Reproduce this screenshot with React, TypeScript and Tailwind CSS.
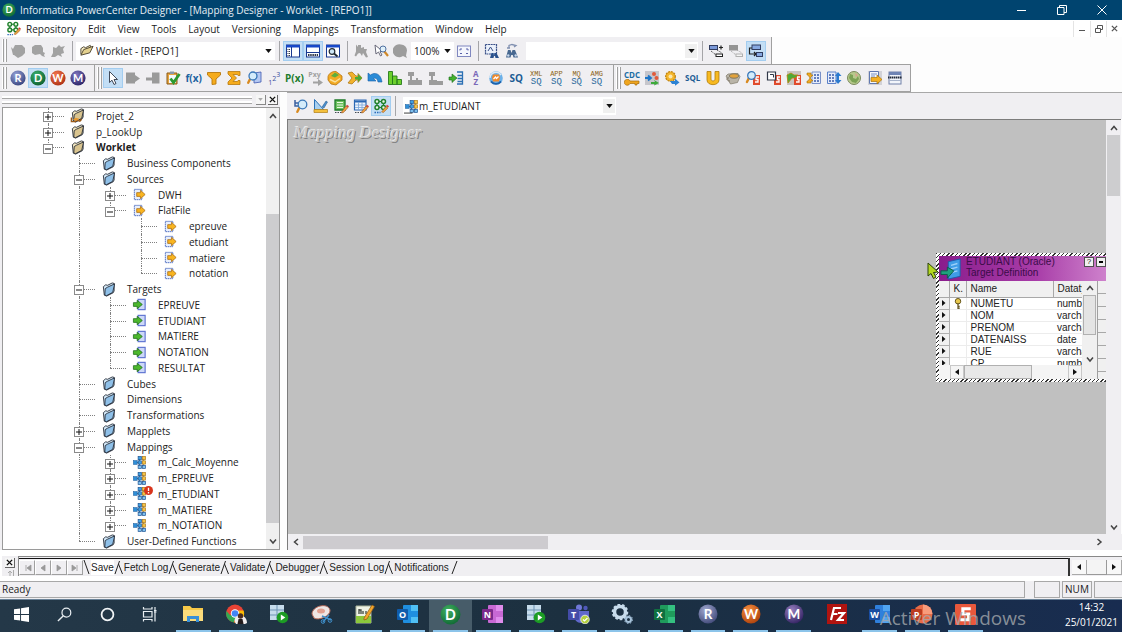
import React, { useState } from 'react';

type IconName = string;

interface TreeNode {
  label: string;
  depth: number;
  icon: 'project' | 'folderTan' | 'folderBlue' | 'source' | 'target' | 'mapping' | 'mappingError';
  toggle?: '+' | '-';
  last?: boolean;
  lines?: number[];
  bold?: boolean;
}

const TREE: TreeNode[] = [
  { label: 'Projet_2', depth: 0, icon: 'project', toggle: '+' },
  { label: 'p_LookUp', depth: 0, icon: 'folderTan', toggle: '+' },
  { label: 'Worklet', depth: 0, icon: 'folderTan', toggle: '-', last: true, bold: true },
  { label: 'Business Components', depth: 1, icon: 'folderBlue' },
  { label: 'Sources', depth: 1, icon: 'folderBlue', toggle: '-' },
  { label: 'DWH', depth: 2, icon: 'source', toggle: '+', lines: [1] },
  { label: 'FlatFile', depth: 2, icon: 'source', toggle: '-', last: true, lines: [1] },
  { label: 'epreuve', depth: 3, icon: 'source', lines: [1] },
  { label: 'etudiant', depth: 3, icon: 'source', lines: [1] },
  { label: 'matiere', depth: 3, icon: 'source', lines: [1] },
  { label: 'notation', depth: 3, icon: 'source', last: true, lines: [1] },
  { label: 'Targets', depth: 1, icon: 'folderBlue', toggle: '-' },
  { label: 'EPREUVE', depth: 2, icon: 'target', lines: [1] },
  { label: 'ETUDIANT', depth: 2, icon: 'target', lines: [1] },
  { label: 'MATIERE', depth: 2, icon: 'target', lines: [1] },
  { label: 'NOTATION', depth: 2, icon: 'target', lines: [1] },
  { label: 'RESULTAT', depth: 2, icon: 'target', last: true, lines: [1] },
  { label: 'Cubes', depth: 1, icon: 'folderBlue' },
  { label: 'Dimensions', depth: 1, icon: 'folderBlue' },
  { label: 'Transformations', depth: 1, icon: 'folderBlue' },
  { label: 'Mapplets', depth: 1, icon: 'folderBlue', toggle: '+' },
  { label: 'Mappings', depth: 1, icon: 'folderBlue', toggle: '-' },
  { label: 'm_Calc_Moyenne', depth: 2, icon: 'mapping', toggle: '+', lines: [1] },
  { label: 'm_EPREUVE', depth: 2, icon: 'mapping', toggle: '+', lines: [1] },
  { label: 'm_ETUDIANT', depth: 2, icon: 'mappingError', toggle: '+', lines: [1] },
  { label: 'm_MATIERE', depth: 2, icon: 'mapping', toggle: '+', lines: [1] },
  { label: 'm_NOTATION', depth: 2, icon: 'mapping', toggle: '+', last: true, lines: [1] },
  { label: 'User-Defined Functions', depth: 1, icon: 'folderBlue', last: true },
];

const MENUS = ['Repository', 'Edit', 'View', 'Tools', 'Layout', 'Versioning', 'Mappings', 'Transformation', 'Window', 'Help'];
const OUTPUT_TABS = ['Save', 'Fetch Log', 'Generate', 'Validate', 'Debugger', 'Session Log', 'Notifications'];
const COLUMNS = [
  { name: 'NUMETU', type: 'number', key: true },
  { name: 'NOM', type: 'varchar2' },
  { name: 'PRENOM', type: 'varchar2' },
  { name: 'DATENAISS', type: 'date' },
  { name: 'RUE', type: 'varchar2' },
  { name: 'CP', type: 'number' },
];

/* ---------- shared drawings, all on a 16x16 grid ---------- */

function MappingGlyph() {
  return (
    <g>
      <path d="M5 8h3M8 3v10M8 3h2M8 13h2M12 3v10" stroke="#4a6a8a" fill="none" />
      <rect x="1.5" y="6" width="4" height="4" fill="#2f8fd8" stroke="#1d5f9e" strokeWidth=".6" />
      <rect x="6.5" y="1.5" width="3.5" height="3.5" fill="#3fa0e0" stroke="#1d4f8e" strokeWidth=".7" />
      <rect x="6.5" y="6.2" width="3.5" height="3.5" fill="#3fa0e0" stroke="#1d4f8e" strokeWidth=".7" />
      <rect x="6.5" y="11" width="3.5" height="3.5" fill="#7cc0ee" stroke="#1d4f8e" strokeWidth=".7" />
      <rect x="11" y="1.5" width="3.5" height="3.5" fill="#f6c445" stroke="#a8761a" strokeWidth=".7" />
      <rect x="11" y="6.2" width="3.5" height="3.5" fill="#f6c445" stroke="#a8761a" strokeWidth=".7" />
      <rect x="11" y="11" width="3.5" height="3.5" fill="#7cc0ee" stroke="#1d4f8e" strokeWidth=".7" />
    </g>
  );
}

function FolderGlyph({ front, back }: { front: string; back: string }) {
  return (
    <g stroke="#1c2430" strokeWidth=".9" strokeLinejoin="round">
      <path d="M2.500 5l2.500-2 2 .5 5-2.500 2 .5v8l-1 2-7 3.500-2.500-1z" fill={back} />
      <path d="M4.500 7l2.500-1.500 7.500-3.500-2 9-6.500 3.500-2-.5z" fill={front} />
    </g>
  );
}

function DesignerGlyph() {
  return (
    <g>
      <g fill="#eaf7e4" stroke="#20802c" strokeWidth="1.500">
        <circle cx="4" cy="3.500" r="2" />
        <circle cx="10.500" cy="3.500" r="2" />
        <circle cx="4" cy="9.500" r="2" />
        <circle cx="10.500" cy="9.500" r="2" />
      </g>
      <path d="M6 3.500h2.500M6 9.500h2.500M4 5.500v2M10.500 5.500v2" stroke="#20802c" strokeWidth="1.200" />
      <path d="M8.500 14l4.500-5.500 2 1.500-4.500 4.500z" fill="#e8a040" stroke="#a05a20" strokeWidth=".5" />
      <path d="M13 8l1-1.300 2 1.500-1 1.300z" fill="#d83a30" />
      <path d="M1.500 14.500h6" stroke="#2a6ab8" strokeWidth="1.300" strokeDasharray="1.500 1" />
    </g>
  );
}

function Pencil() {
  return (
    <g>
      <path d="M8.500 14l4.500-6 2 1.500-4.500 5-2 .5z" fill="#f0a040" stroke="#8a4a18" strokeWidth=".5" />
      <path d="M13 8l1-1.200 2 1.500-1 1.200z" fill="#d04038" />
    </g>
  );
}

function Lens({ x = 6, y = 6, r = 4 }: { x?: number; y?: number; r?: number }) {
  return (
    <g>
      <path d={`M${x - r * 0.7} ${y + r * 0.7}L${x - r * 1.2} ${y + r * 1.7}`} stroke="#d88a20" strokeWidth="2.400" strokeLinecap="round" />
      <circle cx={x} cy={y} r={r} fill="#d4ecfb" stroke="#3a78b8" strokeWidth="1.300" />
    </g>
  );
}

const ICONS: Record<IconName, React.ReactNode> = {
  mapping: <MappingGlyph />,
  mappingError: <MappingGlyph />,
  folderTan: <FolderGlyph front="#d9c48f" back="#f2e6c0" />,
  project: (
    <g>
      <FolderGlyph front="#d9c48f" back="#f2e6c0" />
      <path d="M1.500 10v4.500h4l2-1.500 3 1 2-2" fill="none" stroke="#9a5a18" strokeWidth="1.500" />
      <path d="M3 12.500l3-2 4 1-3 2z" fill="#e89a30" />
    </g>
  ),
  folderBlue: <FolderGlyph front="#8fc0e8" back="#d5e9f8" />,
  folderOpen: (
    <g stroke="#3a3220" strokeWidth=".9" strokeLinejoin="round">
      <path d="M2 12V6l3-2 2 1 5-2.500 1 2.500" fill="#f6ecc4" />
      <path d="M2 13l3-6 10-3.500-3.500 7z" fill="#e3d08e" />
    </g>
  ),
  source: (
    <g>
      <rect x="2.500" y="2.500" width="8" height="11" fill="#e8effb" stroke="#4a6ac0" strokeDasharray="1.500 .6" />
      <path d="M5 6h4V3.500L14 8l-5 4.500V10H5z" fill="#f9b520" stroke="#a86a10" strokeWidth=".8" />
    </g>
  ),
  target: (
    <g>
      <rect x="6.500" y="2.500" width="7.500" height="11" fill="#cdd8f8" stroke="#5a70d0" strokeWidth="1.200" />
      <path d="M1.500 6h4V3.500L11 8l-5.500 4.500V10h-4z" fill="#4cb82c" stroke="#1c6a18" strokeWidth=".8" />
    </g>
  ),
  designer: <DesignerGlyph />,
  greyA: <path d="M1 4l2 2 2-4h7l3 3v5l-3 3-4 2-4-3H3z" fill="#a2a2a2" />,
  greyB: <path d="M2 4l3-2h6l2 3v4l2 1-1 2 1 2-3-1-2-2-5 1-3-2z" fill="#a2a2a2" />,
  greyC: <path d="M3 4l3 1 3-3 2 2 4-1-2 3 1 4-3 1 1 3-4-2-3 2-4 0 2-4z" fill="#a2a2a2" />,
  paneLeft: (
    <g>
      <rect x="1.500" y="2" width="13" height="12" fill="#fff" stroke="#183890" />
      <path d="M1 2h14v2.500H1z" fill="#1848c8" />
      <path d="M6.500 4v10" stroke="#183890" />
      <path d="M3 6v7M4.500 6v7" stroke="#303848" strokeDasharray="1 1" />
    </g>
  ),
  paneBottom: (
    <g>
      <rect x="1.500" y="2" width="13" height="12" fill="#fff" stroke="#183890" />
      <path d="M1 2h14v2.500H1z" fill="#1848c8" />
      <path d="M2 9.500h12" stroke="#183890" />
      <path d="M3 12h10" stroke="#303848" strokeWidth="2" strokeDasharray="1.500 .7" />
    </g>
  ),
  paneZoom: (
    <g>
      <rect x="1.500" y="2" width="13" height="12" fill="#fff" stroke="#183890" />
      <path d="M1 2h14v2.500H1z" fill="#1848c8" />
      <circle cx="7" cy="8.500" r="2.800" fill="#d0e8f8" stroke="#202830" strokeWidth="1.200" />
      <path d="M9 10.500l3.500 3" stroke="#202830" strokeWidth="1.800" />
    </g>
  ),
  cursorGrey: (
    <path d="M3 1.500l2 2.500V2h3v3l3-1v2h3l-1 3 2 5-2 .5-3-4.500-1 3-2-3-2 .5-2 3-1.500-1 1.500-4H3z" fill="#a0a0a0" />
  ),
  cursorZoom: (
    <g>
      <path d="M2 2l1 9 2.500-2 2 4 1.500-1-2-3.500h3z" fill="#fff" stroke="#686878" />
      <path d="M11 8l4 5" stroke="#d08828" strokeWidth="2.200" />
      <circle cx="10" cy="6" r="3" fill="#dff0fa" stroke="#5070a0" />
    </g>
  ),
  greyBall: <path d="M8 1.500a6 6 0 0 1 6 6l-1 5 1 2.500-4-2a6.500 6.500 0 1 1-2-11.500z" fill="#9c9c9c" />,
  fit: (
    <g>
      <rect x="1.500" y="3" width="13" height="10.500" fill="#f4f6fd" stroke="#8088c0" />
      <path d="M4 6h2M10 6h2M4 10.500h2M10 10.500h2M4 6v1.500M12 6v1.500" stroke="#5860a8" />
    </g>
  ),
  find: (
    <g>
      <rect x="1.500" y="1.500" width="11" height="9.500" fill="#eaf0fa" stroke="#3a5088" strokeWidth="1.200" strokeDasharray="2 .6" />
      <path d="M4 8l2.500-4L9 8" fill="none" stroke="#3a5088" />
      <path d="M6 15l1.500-5h2l.5 3 .5-3h2L15 15h-3.500l-.5-2h-1l-.5 2z" fill="#28508c" />
    </g>
  ),
  findNext: (
    <g>
      <path d="M5 5V2.500l3-1 4 1-2 1.500M3 5h3" fill="none" stroke="#8090b0" strokeWidth="1.300" />
      <path d="M2 14.500l2-7.500h2.500l1 3 1-3H11l3 7.500H9.500l-.8-2.500H7.300l-.8 2.500z" fill="#486890" />
      <circle cx="4.300" cy="12.500" r="1.200" fill="#c8d8ec" />
      <circle cx="11.700" cy="12.500" r="1.200" fill="#c8d8ec" />
    </g>
  ),
  iconizeA: (
    <g>
      <rect x="1.500" y="2.500" width="8" height="4" fill="#7a98d8" stroke="#303c60" />
      <path d="M11 4.500h4M13 2.500v4" stroke="#202020" strokeWidth="1.200" />
      <path d="M3 8l5 4M9 7l5 3" stroke="#303030" strokeDasharray="1 1" />
      <rect x="8" y="11" width="6.500" height="2.500" fill="#fff" stroke="#202020" />
    </g>
  ),
  iconizeB: (
    <g>
      <rect x="1" y="2" width="9" height="5.500" fill="#949494" />
      <path d="M3 8l5 4M9 7l5 3" stroke="#a0a0a0" strokeDasharray="1 1" />
      <rect x="8" y="11" width="6.500" height="2.500" fill="#f4f4f4" stroke="#b0b0b0" />
    </g>
  ),
  iconizeC: (
    <g>
      <rect x="4" y="2" width="8.500" height="4.500" fill="#86a8e0" stroke="#303c60" />
      <path d="M4 5H1.500v6H8M6 9l2 2-2 2" fill="none" stroke="#202020" strokeWidth="1.200" />
      <rect x="8.500" y="9.500" width="6" height="4" fill="#86a8e0" stroke="#303c60" />
    </g>
  ),
  cursor: <path d="M4.500 1.500v11l2.500-2.300L9 14.500l2-1-2-4h3.500z" fill="#fff" stroke="#303848" strokeWidth=".9" />,
  greyTag: <path d="M1 2.500h9V5l5 3.500L10 12v1.500H1z" fill="#9a9a9a" />,
  greyTag2: <path d="M7 2.500h7.500v11H7v-3H1v-3h6z" fill="#9a9a9a" />,
  clipboard: (
    <g>
      <path d="M2 3h10v11H2z" fill="#e7a540" stroke="#8a5a18" />
      <path d="M4 5h7v8H4z" fill="#f3f7fb" />
      <path d="M5 1.500h4V4H5z" fill="#8898a8" />
      <path d="M5.500 8.500l3 4L14.500 4" fill="none" stroke="#2a9a30" strokeWidth="2.800" />
    </g>
  ),
  filter: <path d="M1.500 2.500h13v2.500L10 9v5l-4 .5V9L1.500 5z" fill="#f5ab1c" stroke="#b8780c" strokeWidth=".9" />,
  sigma: <path d="M2 1.500h12v4h-2L11.500 4.500H7L10.500 8 7 11.500h4.500l.5-1h2v4H2V12l4-4-4-4z" fill="#f5ab1c" stroke="#b8780c" strokeWidth=".8" />,
  lookup: (
    <g>
      <path d="M8 3l7-1v10l-7 1z" fill="#b4c8f2" stroke="#4058b0" strokeWidth=".8" />
      <Lens x={7} y={6} r={4} />
    </g>
  ),
  ball: (
    <g>
      <path d="M1 6.500C2 3 6 1 9 1.500L15 6v4l-6 5-5-1-3-4z" fill="#f2ab24" stroke="#b8740c" strokeWidth=".8" />
      <path d="M4 6l4-3.500L12 5 8 7.500z" fill="#5cae3c" />
      <path d="M3 9.500l5 2.500 5-3.500" fill="none" stroke="#fbe09a" strokeWidth="1.500" />
    </g>
  ),
  router: (
    <g>
      <path d="M1 3l4-1 4 4h2V3.500L15 8l-4 4.500V10H9l-4 4-4-1 4-5z" fill="#f2b22c" stroke="#a8700c" strokeWidth=".7" />
      <path d="M8 7h3V4l4 4-4 4V9.500H8z" fill="#4caa38" />
    </g>
  ),
  undo: <path d="M1 3l2.500 2C8 1.500 14 4 15 12h-4c-.5-3-2-4.500-4.500-3.500L9 11H1z" fill="#2b8bd6" stroke="#1a5fa8" strokeWidth=".6" />,
  barsGreen: (
    <g fill="#6cd02c" stroke="#287a1c" strokeWidth=".9">
      <path d="M1.500 1.500h4v13h-4zM5.500 6h4.500v8.500H5.500zM10 9.500h4.500v5H10z" />
    </g>
  ),
  barsGreyA: <path d="M1 2h6v4H5v4h4V8h2v2h4v5H1v-5h2V6H1z" fill="#9c9c9c" />,
  barsGreyB: <path d="M1 2h6v4H5v4h4v1h6v4H1v-5h2V6H1z" fill="#9c9c9c" />,
  sourceIn: (
    <g>
      <path d="M1 7h3V4l5 4-5 4.500V10H1z" fill="#42b02c" stroke="#1a6a18" strokeWidth=".6" />
      <path d="M9 2h5.500v12H9M9.500 5.500H14M9.500 8.500H14M9.500 11.500H14" fill="none" stroke="#2c70b4" strokeWidth="1.300" />
    </g>
  ),
  globe: (
    <g>
      <circle cx="8" cy="8" r="6.800" fill="#6cb0e8" />
      <path d="M2 8a6 6 0 0 1 11-3" stroke="#dceaf6" strokeWidth="1.500" fill="none" />
      <path d="M5 4.500h6l1 3-1 4H5l-1-4z" fill="#f08a2c" />
      <path d="M5.500 9l2-2 1 1.500 2-2" stroke="#fff" strokeWidth="1.300" fill="none" />
      <path d="M3 11.500c3 3 7 3 10 0" stroke="#1d62ac" strokeWidth="1.800" fill="none" />
    </g>
  ),
  flow: (
    <g>
      <path d="M1 1h14v14H1z" fill="#c6c6cc" />
      <path d="M1 8h5M4 5.500L7 8l-3 2.500" stroke="#1f76c8" strokeWidth="1.800" fill="none" />
      <circle cx="10" cy="4" r="2" fill="#e25a3a" />
      <circle cx="12.500" cy="8" r="2" fill="#e25a3a" />
      <path d="M7 12h4l-1-2 5 3-5 2.500.5-1.500H7z" fill="#3daa3a" />
    </g>
  ),
  gearArrow: (
    <g>
      <circle cx="6.500" cy="6.500" r="4.800" fill="#f4b62c" stroke="#c08414" strokeWidth="1.300" strokeDasharray="2 .8" />
      <circle cx="6.500" cy="6.500" r="2" fill="#fbe7ae" />
      <path d="M6 11h5V8.500l4.500 4-4.500 3.200V14H8z" fill="#2c82d4" />
    </g>
  ),
  union: <path d="M2 1.500h4V9c0 2.600 4 2.600 4 0V1.500h4V10c0 6.200-12 6.200-12 0z" fill="#f7b920" stroke="#b07c0c" strokeWidth=".8" />,
  mug: (
    <g>
      <path d="M1 6l2-2 10-.5 2 3-2.500 6-7 1.500-3-5z" fill="#b9b4a8" stroke="#7e7868" strokeWidth=".7" />
      <ellipse cx="9" cy="6" rx="4.500" ry="2.200" fill="#e2a23c" stroke="#807860" />
      <path d="M4 8c-3-1-3 3 1 3" fill="none" stroke="#807868" />
    </g>
  ),
  lensRed: (
    <g>
      <path d="M8 5h7v10H8z" fill="#e04a2c" />
      <path d="M14 7h-3v2.500h2V12h-3" stroke="#fff" strokeWidth="1.300" fill="none" />
      <Lens x={6.500} y={5.500} r={3.800} />
    </g>
  ),
  docRed: (
    <g>
      <path d="M8 5h7v10H8z" fill="#e04a2c" />
      <path d="M14 7h-2.500v2.500H13V12h-3" stroke="#fff" strokeWidth="1.300" fill="none" />
      <path d="M1.500 2h8v8h-8z" fill="#fff" stroke="#303848" strokeWidth="1.200" />
      <path d="M4 4.500h3.500v3" stroke="#303848" fill="none" />
    </g>
  ),
  arrowRed: (
    <g>
      <path d="M1 1h14v14H1z" fill="#c9c4c0" />
      <path d="M8 5h7v10H8z" fill="#e04a2c" />
      <path d="M14 7h-2.500v2.500H13V12h-3" stroke="#fff" strokeWidth="1.300" fill="none" />
      <path d="M1 5l4-2 3 2h4L9 8H6l-4 5z" fill="#4caa38" stroke="#b8860c" strokeWidth=".8" />
    </g>
  ),
  xmlGen: (
    <g>
      <path d="M6 2h8.500v11.500H6z" fill="#e5ecfa" stroke="#7890c8" />
      <path d="M8 5h5M8 8h5M8 11h5" stroke="#3858a8" strokeWidth="1.500" strokeDasharray="2 1" />
      <path d="M1 3h4v2h2L4 8l3 3H5v2H1v-2h1l2-3-2-3H1z" fill="#f1ab22" stroke="#a8720c" strokeWidth=".6" />
    </g>
  ),
  xmlParse: (
    <g>
      <path d="M1.500 2H10v11.500H1.500z" fill="#e5ecfa" stroke="#5a80c8" />
      <path d="M3 5h5M3 8h5M3 11h5" stroke="#3858a8" strokeWidth="1.500" strokeDasharray="2 1" />
      <path d="M9 6l3-4 3.500 4H13v4h2.500L12 14l-3-4h1.500V6z" fill="#2a7ad0" />
    </g>
  ),
  worldGreen: (
    <g>
      <circle cx="8" cy="8" r="6.500" fill="#b7c98c" stroke="#7c8a5c" />
      <path d="M4 4l3 1v3l3 1 2-3 1 3-3 4-4-1-3-4z" fill="#7ba255" />
      <path d="M9 3l3 2-2 2z" fill="#d9a08c" />
    </g>
  ),
  docArrow: (
    <g>
      <path d="M1 1h14v14H1z" fill="#d2d2d8" />
      <path d="M2.500 1.500h9v12h-9z" fill="#f3f6fd" stroke="#6078b0" />
      <path d="M4 4h6M4 6h4" stroke="#7890c0" />
      <path d="M4 7.500h6V5l5 4.500-5 4.500v-2.500H4z" fill="#f5b021" stroke="#a8720c" strokeWidth=".7" />
    </g>
  ),
  grid: (
    <g>
      <rect x="2" y="2" width="12" height="12" fill="#f2f5fb" stroke="#7080a8" />
      <path d="M2 2h12v3H2z" fill="#6f84b4" />
      <path d="M1 7.500h14" stroke="#202838" strokeWidth="2" strokeDasharray="1.500 .5" />
      <path d="M2 10.500h12" stroke="#a8b4cc" />
    </g>
  ),
  srcAnalyzer: (
    <g>
      <path d="M2 2v6h3M2 5h3" stroke="#3a60a0" strokeWidth="1.500" fill="none" />
      <Lens x={9.500} y={6.500} r={4.300} />
    </g>
  ),
  tgtDesigner: (
    <g>
      <path d="M1.500 1.500L11 12H1.500z" fill="#a8d0f0" stroke="#2b72b8" />
      <path d="M1 11.500h13.500v3H1z" fill="#f4c03c" stroke="#b07c14" strokeWidth=".7" />
      <path d="M9 9l4-6 1.500 1-3.500 6z" fill="#4a90d0" stroke="#205080" strokeWidth=".5" />
    </g>
  ),
  transDev: (
    <g>
      <path d="M2 2h10v10H2z" fill="#6cbf5c" stroke="#1c7a28" strokeWidth="1.300" />
      <path d="M4 4.500h6M4 7h6M4 9.500h6" stroke="#eaf8e4" />
      <path d="M2 14.500h8" stroke="#404850" strokeDasharray="1.500 1" />
      <Pencil />
    </g>
  ),
  mappletDes: (
    <g>
      <path d="M1.500 2H13v10H1.500z" fill="#eef4fc" stroke="#2c68b4" strokeWidth="1.200" />
      <path d="M2 3.500h11" stroke="#2c68b4" strokeWidth="2" />
      <path d="M2 7h11M2 9.500h11M5.500 4v8M9 4v8" stroke="#78a4d8" strokeWidth=".8" />
      <path d="M2 14.500h8" stroke="#404850" strokeDasharray="1.500 1" />
      <Pencil />
    </g>
  ),
};

function Icon({ name, className = 'size-4' }: { name: IconName; className?: string }) {
  return (
    <svg viewBox="0 0 16 16" className={`${className} shrink-0`} aria-hidden="true">
      {ICONS[name]}
    </svg>
  );
}

function Orb({ letter, light, dark, className = 'size-4' }: { letter: string; light: string; dark: string; className?: string }) {
  const id = `orb-${letter}-${className.length}`;
  return (
    <svg viewBox="0 0 20 20" className={`${className} shrink-0`}>
      <defs>
        <radialGradient id={id} cx=".38" cy=".3" r=".8">
          <stop offset="0" stopColor={light} />
          <stop offset="1" stopColor={dark} />
        </radialGradient>
      </defs>
      <circle cx="10" cy="10" r="9.500" fill={`url(#${id})`} />
      <text x="10" y="14.800" textAnchor="middle" fontSize="13.500" fontWeight="700" fill="#fff" fontFamily="Lato, sans-serif">{letter}</text>
    </svg>
  );
}

function ToolButton({ label, active, children }: { label: string; active?: boolean; children: React.ReactNode }) {
  return (
    <button
      aria-label={label}
      className={`flex h-5 w-5 shrink-0 items-center justify-center ${active ? 'bg-[#c3def5] outline outline-[#a3cdf0] -outline-offset-1' : ''}`}
    >
      {children}
    </button>
  );
}

function Grip() {
  return (
    <div className="flex h-full shrink-0 gap-px py-0.5 pl-0.5 pr-px">
      <span className="w-0.5 border-r border-[#a0a0a0] bg-white" />
      <span className="w-0.5 border-r border-[#a0a0a0] bg-white" />
    </div>
  );
}

function Sep() {
  return <span className="ml-1 mr-[3px] h-5 w-px shrink-0 bg-[#a5a5a8]" />;
}

function Combo({ label, options, className, arrow = 'bg-[#f0f0f0]' }: { label: string; options: string[]; className: string; arrow?: string }) {
  return (
    <div className="relative flex h-[18px] min-w-0 items-center">
      <select aria-label={label} className={`h-full appearance-none bg-white text-[10px] leading-4 text-[#222] outline-none ${className}`}>
        {options.map(o => <option key={o}>{o}</option>)}
      </select>
      <span className={`pointer-events-none absolute right-px top-0.5 flex h-[14px] w-3 items-center justify-center ${arrow}`}>
        <svg viewBox="0 0 8 5" className="h-1 w-[7px]"><path d="M0 0h8L4 5z" fill="#111" /></svg>
      </span>
    </div>
  );
}

function TwoLine({ top }: { top: string }) {
  return (
    <span className="flex flex-col items-center font-['Liberation_Mono',monospace] text-[7px] leading-[7px]">
      <span className="text-[#8c6420]">{top}</span>
      <span className="text-[9px] leading-2 text-[#2a6a9c]">SQ</span>
    </span>
  );
}

const glyphText = 'text-[10px] font-bold leading-none';

const TRANSFORM_TOOLS: { label: string; node: React.ReactNode }[] = [
  { label: 'Select', node: <Icon name="cursor" /> },
  { label: 'Link columns', node: <Icon name="greyTag" /> },
  { label: 'Autolink', node: <Icon name="greyTag2" /> },
  { label: 'Validate', node: <Icon name="clipboard" /> },
  { label: 'Expression', node: <span className={`${glyphText} text-[#1c62a0]`}>f(x)</span> },
  { label: 'Filter', node: <Icon name="filter" /> },
  { label: 'Aggregator', node: <Icon name="sigma" /> },
  { label: 'Lookup', node: <Icon name="lookup" /> },
  { label: 'Sequence', node: <span className="flex items-end text-[7px] leading-none text-[#3a50a0]"><i className="not-italic">1</i><i className="pb-1 not-italic">2</i><i className="pb-2 not-italic">3</i></span> },
  { label: 'Procedure', node: <span className={`${glyphText} text-[#1c7c2c]`}>P(x)</span> },
  { label: 'External procedure', node: <span className="flex flex-col items-center text-[7px] font-bold leading-2 text-[#a2a2a2]">Pxy<svg viewBox="0 0 10 7" className="ml-1.5 h-[7px] w-2.5"><path d="M0 2.500h5V0l5 3.500L5 7V4.500H0z" fill="#a2a2a2" /></svg></span> },
  { label: 'Joiner', node: <Icon name="ball" /> },
  { label: 'Router', node: <Icon name="router" /> },
  { label: 'Update strategy', node: <Icon name="undo" /> },
  { label: 'Rank', node: <Icon name="barsGreen" /> },
  { label: 'Mapplet input', node: <Icon name="barsGreyA" /> },
  { label: 'Mapplet output', node: <Icon name="barsGreyB" /> },
  { label: 'Normalizer', node: <Icon name="sourceIn" /> },
  { label: 'Sorter', node: <span className="flex flex-col text-[8px] font-bold leading-2 text-[#7a68b8]"><span>A</span><span>Z</span></span> },
  { label: 'Web service', node: <Icon name="globe" /> },
  { label: 'Source qualifier', node: <span className={`${glyphText} text-[#1c5c94]`}>SQ</span> },
  { label: 'XML source qualifier', node: <TwoLine top="XML" /> },
  { label: 'Application source qualifier', node: <TwoLine top="APP" /> },
  { label: 'MQ source qualifier', node: <TwoLine top="MQ" /> },
  { label: 'AMG source qualifier', node: <TwoLine top="AMG" /> },
];

const ADVANCED_TOOLS: { label: string; node: React.ReactNode }[] = [
  { label: 'CDC', node: <span className="flex flex-col items-center text-[8px] font-bold leading-2 text-[#1c6ca4]">CDC<svg viewBox="0 0 16 7" className="h-[7px] w-4"><path d="M6 2h9v2.500h-2V6h-2V4.500H6A3 3 0 1 1 6 2z" fill="#efa51e" stroke="#a86c0c" strokeWidth=".7" /></svg></span> },
  { label: 'Transaction control', node: <Icon name="flow" /> },
  { label: 'Custom', node: <Icon name="gearArrow" /> },
  { label: 'SQL', node: <span className="text-[8px] font-bold leading-none text-[#1c5c94]">SQL</span> },
  { label: 'Union', node: <Icon name="union" /> },
  { label: 'Java', node: <Icon name="mug" /> },
  { label: 'Unstructured lookup', node: <Icon name="lensRed" /> },
  { label: 'Unstructured source', node: <Icon name="docRed" /> },
  { label: 'Unstructured router', node: <Icon name="arrowRed" /> },
  { label: 'XML generator', node: <Icon name="xmlGen" /> },
  { label: 'XML parser', node: <Icon name="xmlParse" /> },
  { label: 'HTTP', node: <Icon name="worldGreen" /> },
  { label: 'Identity resolution', node: <Icon name="docArrow" /> },
  { label: 'Data masking', node: <Icon name="grid" /> },
];

function TreeRow({ node }: { node: TreeNode }) {
  const indents = Array.from({ length: node.depth }, (_, i) => i);
  return (
    <li className="flex min-h-0 flex-1 items-center pl-[30px]">
      {indents.map(i => (
        <span key={i} className="relative w-[31px] shrink-0 self-stretch">
          {node.lines?.includes(i) && <span className="absolute inset-y-0 left-[15px] border-l border-dotted border-[#808080]" />}
        </span>
      ))}
      <span className="relative w-[31px] shrink-0 self-stretch">
        <span className={`absolute left-[15px] top-0 border-l border-dotted border-[#808080] ${node.last ? 'h-1/2' : 'h-full'}`} />
        <span className="absolute left-[15px] right-0 top-1/2 border-t border-dotted border-[#808080]" />
        {node.toggle && (
          <button aria-label={`Toggle ${node.label}`} className="absolute left-2.5 top-1 flex size-[10px] items-center justify-center border border-[#8a8a8a] bg-white">
            <svg viewBox="0 0 8 8" className="size-2"><path d={node.toggle === '+' ? 'M1 4h6M4 1v6' : 'M1 4h6'} stroke="#111" /></svg>
          </button>
        )}
      </span>
      <span className="relative flex w-[31px] shrink-0 pl-1.5">
        <Icon name={node.icon} className="size-[15px]" />
        {node.icon === 'mappingError' && (
          <svg viewBox="0 0 10 10" className="absolute right-1 top-0 size-[9px]">
            <circle cx="5" cy="5" r="5" fill="#d8341c" /><path d="M5 2v3.500M5 6.800v1.400" stroke="#fff" strokeWidth="1.500" />
          </svg>
        )}
      </span>
      <span className={`whitespace-nowrap pl-px leading-none ${node.bold ? 'font-bold' : ''}`}>{node.label}</span>
    </li>
  );
}

function Chevron({ dir, className = 'size-2' }: { dir: 'up' | 'down' | 'left' | 'right'; className?: string }) {
  const paths = { up: 'M1 6l3-3.500L7 6', down: 'M1 2.500L4 6l3-3.500', left: 'M6 1L2.500 4 6 7', right: 'M2.500 1L6 4 2.500 7' };
  return <svg viewBox="0 0 8 8" className={className}><path d={paths[dir]} fill="none" stroke="#454545" strokeWidth="1.500" /></svg>;
}

function Triangle({ dir }: { dir: 'left' | 'right' }) {
  return <svg viewBox="0 0 4 6" className="h-1.5 w-1"><path d={dir === 'left' ? 'M4 0v6L0 3z' : 'M0 0v6l4-3z'} fill="#111" /></svg>;
}

function TargetWindow() {
  return (
    <div className="absolute left-[648px] top-[133px] h-[129px] w-[200px] bg-[repeating-linear-gradient(135deg,#333_0_1px,#fff_1px_3px)] p-[3px]">
      <div className="flex h-full flex-col overflow-hidden bg-[#f0f0f0] font-['Liberation_Sans',sans-serif] text-[10px] text-[#222]">
        <div className="flex h-[25px] shrink-0 items-center gap-1 bg-linear-to-r from-[#8a1c8c] via-[#a83ca8] to-[#dc9ada] pl-px">
          <svg viewBox="0 0 24 24" className="size-[22px] shrink-0">
            <path d="M9 4l13-3v19L9 23z" fill="#3f9ce6" stroke="#1c5ca8" />
            <path d="M12 8l7-2M12 12l7-2M12 16l7-2" stroke="#9cd0f8" strokeWidth="1.500" />
            <path d="M1 14h7v-4l7 4-7 8v-4H1z" fill="#1fa07c" stroke="#0c5a48" />
          </svg>
          <div className="flex-1 self-stretch leading-[11px] text-[#3a0c48]">
            <div>ETUDIANT (Oracle)</div>
            <div>Target Definition</div>
          </div>
          <div className="flex gap-0.5 self-start pr-[27px] pt-px">
            <button aria-label="Help" className="flex size-[10px] items-center justify-center border border-[#505050] bg-[#f0f0f0] text-[8px] leading-none">?</button>
            <button aria-label="Minimize" className="flex size-[10px] items-center justify-center border border-[#505050] bg-[#f0f0f0]"><span className="h-0.5 w-1 bg-black" /></button>
          </div>
        </div>
        <div className="flex min-h-0 flex-1">
          <div className="flex w-[143px] flex-col overflow-hidden">
            <div className="min-h-0 flex-1 overflow-hidden">
              <table className="w-full table-fixed border-collapse bg-white">
                <thead>
                  <tr className="h-4 bg-[#f0f0f0] text-left">
                    <th className="w-2.5 border-b border-r border-[#a8a8a8]" />
                    <th className="w-[17px] border-b border-r border-[#a8a8a8] pl-1 font-normal leading-none">K.</th>
                    <th className="w-[87px] border-b border-r border-[#a8a8a8] pl-1 font-normal leading-none">Name</th>
                    <th className="overflow-hidden whitespace-nowrap border-b border-[#a8a8a8] pl-1 font-normal leading-none">Datatype</th>
                  </tr>
                </thead>
                <tbody>
                  {COLUMNS.map(c => (
                    <tr key={c.name} className="h-3 border-b border-[#ececec] leading-[11px]">
                      <td className="border-b border-r border-[#b0b0b0] bg-[#f0f0f0] p-0">
                        <svg viewBox="0 0 4 6" className="mx-auto h-1.5 w-1"><path d="M0 0v6l3.500-3z" fill="#111" /></svg>
                      </td>
                      <td className="border-r border-[#ececec] p-0">
                        {c.key && (
                          <svg viewBox="0 0 10 12" className="mx-auto h-[11px] w-2.5">
                            <circle cx="5" cy="3.500" r="3" fill="#e8c84c" stroke="#5a4a14" /><path d="M5 6v6M5 9h2M5 11h2" stroke="#5a4a14" strokeWidth="1.300" />
                          </svg>
                        )}
                      </td>
                      <td className="p-0 pl-1">{c.name}</td>
                      <td className="overflow-hidden whitespace-nowrap p-0 pl-1">{c.type}</td>
                    </tr>
                  ))}
                </tbody>
              </table>
            </div>
            <div className="flex h-3.5 shrink-0 items-stretch bg-[#f4f4f4] pl-[11px]">
              <button aria-label="Scroll left" className="flex w-3.5 items-center justify-center border border-[#c8c8c8]"><Triangle dir="left" /></button>
              <span className="w-[68px] border border-[#b0b0b0] bg-[#e8e8e8]" />
              <span className="flex-1" />
              <button aria-label="Scroll right" className="flex w-3.5 items-center justify-center border border-[#c8c8c8]"><Triangle dir="right" /></button>
            </div>
          </div>
          <div className="flex w-[15px] flex-col items-center bg-[#f0f0f0] pb-3.5">
            <span className="flex h-[14px] items-center"><Chevron dir="up" /></span>
            <span className="h-10 w-[13px] border border-[#b0b0b0] bg-[#e4e4e4]" />
            <span className="flex flex-1 items-end pb-0.5"><Chevron dir="down" /></span>
          </div>
          <div className="flex-1 border-l border-[#a0a0a0] bg-[repeating-linear-gradient(#f0f0f0_0_12px,#a8a8a8_12px_13px)]" />
        </div>
      </div>
    </div>
  );
}

interface Task { name: string; node: React.ReactNode; running?: boolean; active?: boolean }

function OfficeTile({ letter, back, front, side }: { letter: string; back: string; front: string; side: string }) {
  return (
    <svg viewBox="0 0 22 20" className="h-5 w-[22px]">
      <rect x="6" y="1" width="15" height="18" rx="1" fill={back} />
      <path d="M14 1h7v6h-7zM14 13h7v6h-7z" fill={side} />
      <rect x="0" y="5" width="11" height="11" rx="1" fill={front} />
      <text x="5.500" y="13.500" textAnchor="middle" fontSize="9" fontWeight="700" fill="#fff" fontFamily="Open Sans, sans-serif">{letter}</text>
    </svg>
  );
}

function MonitorTask() {
  return (
    <svg viewBox="0 0 20 20" className="size-5">
      <path d="M1 1h14v15H1z" fill="#c6dcec" />
      <path d="M1 6h14M1 11h14M8 1v15" stroke="#6f94b4" />
      <circle cx="13.500" cy="13.500" r="5.800" fill="#1c9c24" />
      <path d="M11.800 10.500v6l4.500-3z" fill="#fff" />
    </svg>
  );
}

const TASKS: Task[] = [
  { name: 'Start', node: <svg viewBox="0 0 16 16" className="size-[15px]"><path d="M0 2.500l6.500-1v6H0zM7.500 1.300L16 0v7.500H7.500zM0 8.500h6.500v6L0 13.500zM7.500 8.500H16V16l-8.500-1.300z" fill="#fff" /></svg> },
  { name: 'Search', node: <svg viewBox="0 0 16 16" className="size-[15px]"><circle cx="10" cy="6" r="4.700" fill="none" stroke="#e8eef2" strokeWidth="1.300" /><path d="M6.500 9.500L1 15" stroke="#e8eef2" strokeWidth="1.500" /></svg> },
  { name: 'Cortana', node: <svg viewBox="0 0 16 16" className="size-[15px]"><circle cx="8" cy="8" r="6.300" fill="none" stroke="#f2f5f7" strokeWidth="1.900" /></svg> },
  { name: 'Task view', node: <svg viewBox="0 0 16 16" className="size-4"><path d="M1.500 5.500h8.500v5.500H1.500zM1.500 1v2h8.500V1M1.500 15.500v-2h8.500v2M13 1v14.500M12 6h2.500M12 4.500h2.500" fill="none" stroke="#e8eef2" strokeWidth="1.200" /></svg> },
  { name: 'File Explorer', running: true, node: <svg viewBox="0 0 20 18" className="h-[18px] w-5"><path d="M0 1h7l2 2h11v13H0z" fill="#f7c948" /><path d="M0 5h20v11H0z" fill="#fbdc7c" /><path d="M4 17v-6h12v6h-3v-3H7v3z" fill="#3a90d8" /></svg> },
  {
    name: 'Chrome', running: true, node: (
      <svg viewBox="0 0 22 20" className="h-5 w-[22px]">
        <circle cx="10" cy="9.500" r="9" fill="#e84335" />
        <path d="M1.500 7a9 9 0 0 0 7 11.500L12 12l-7-1z" fill="#34a853" />
        <path d="M19 8a9 9 0 0 1-10 10.500l4.500-7V6.500H18.500z" fill="#fbbc05" />
        <circle cx="10" cy="9.500" r="4.200" fill="#fff" /><circle cx="10" cy="9.500" r="3.300" fill="#4285f4" />
        <path d="M9.500 17c0-7 12-8 12.500 2l-2 1h-9z" fill="#f2eeee" /><circle cx="15.500" cy="12" r="2.700" fill="#4a2c20" /><path d="M12.500 20l1-5h4l1 5z" fill="#241c1c" />
      </svg>
    ),
  },
  { name: 'Workflow Monitor', node: <MonitorTask /> },
  { name: 'Snipping Tool', node: <svg viewBox="0 0 22 20" className="h-5 w-[22px]"><path d="M1 10c0-8 16-12 18-4 1 6-12 11-16 8z" fill="#eee6e4" stroke="#b86a58" /><ellipse cx="10" cy="7" rx="4" ry="2.500" fill="#e2a090" /><path d="M11 12l9 4M12 18l6-7" stroke="#3f90cc" strokeWidth="1.500" /><circle cx="12" cy="17.500" r="1.800" fill="none" stroke="#3f90cc" /><circle cx="19" cy="16.500" r="1.800" fill="none" stroke="#3f90cc" /></svg> },
  { name: 'Editor', running: true, node: <svg viewBox="0 0 20 20" className="size-5"><path d="M1 2h15v17H1z" fill="#eef2e6" stroke="#aab49a" /><path d="M1 12h15v7H1z" fill="#8cc83c" /><path d="M4 5v5M4 6h2v4M8 7v3M11 7v3" stroke="#404840" fill="none" strokeWidth="1.300" /><path d="M9 14L17 1l2.500 1.500L12 15l-3 1z" fill="#f3a52c" stroke="#8a5a18" strokeWidth=".7" /></svg> },
  { name: 'Outlook', running: true, node: <OfficeTile letter="O" back="#1f8fe0" side="#50c0f4" front="#0f5cac" /> },
  { name: 'Designer', running: true, active: true, node: <Orb letter="D" light="#4cc06c" dark="#0c5c24" className="size-[21px]" /> },
  { name: 'OneNote', running: true, node: <OfficeTile letter="N" back="#c868d4" side="#e08cec" front="#7c2a8c" /> },
  { name: 'Workflow Manager', running: true, node: <MonitorTask /> },
  { name: 'Teams', running: true, node: <svg viewBox="0 0 22 20" className="h-5 w-[22px]"><circle cx="11" cy="3.500" r="3" fill="#7078d8" /><circle cx="17.500" cy="4" r="2.200" fill="#5058b8" /><path d="M7 7h14v7c0 4-4 5-7 5s-7-1-7-5z" fill="#6068cc" /><rect y="5" width="11" height="11" rx="1" fill="#444ca8" /><text x="5.500" y="13.500" textAnchor="middle" fontSize="9" fontWeight="700" fill="#fff" fontFamily="Open Sans, sans-serif">T</text><circle cx="17" cy="15.500" r="4.300" fill="#b4d040" stroke="#fff" strokeWidth=".7" /><path d="M15 15.500l1.500 1.500 3-3" fill="none" stroke="#fff" strokeWidth="1.200" /></svg> },
  { name: 'Services', running: true, node: <svg viewBox="0 0 22 20" className="h-5 w-[22px]"><circle cx="9" cy="8" r="5.500" fill="none" stroke="#c8dcec" strokeWidth="3.500" /><circle cx="9" cy="8" r="7.400" fill="none" stroke="#c8dcec" strokeWidth="1.800" strokeDasharray="2.600 2" /><circle cx="17.500" cy="15.500" r="2.500" fill="none" stroke="#a8c4dc" strokeWidth="2" /><circle cx="17.500" cy="15.500" r="4" fill="none" stroke="#a8c4dc" strokeDasharray="1.600 1.500" /></svg> },
  { name: 'Excel', running: true, node: <OfficeTile letter="X" back="#1f9c5c" side="#34c080" front="#107040" /> },
  { name: 'Repository Manager', running: true, node: <Orb letter="R" light="#a0a8d0" dark="#3c4474" className="size-[20px]" /> },
  { name: 'Workflow', running: true, node: <Orb letter="W" light="#f89040" dark="#a83c08" className="size-[20px]" /> },
  { name: 'Monitor', running: true, node: <Orb letter="M" light="#9880c0" dark="#2c1c5c" className="size-[20px]" /> },
  { name: 'FileZilla', node: <svg viewBox="0 0 20 20" className="size-5"><rect width="20" height="20" fill="#b01410" /><path d="M4 16L7 4h7M5.500 10h5M11 9h6l-6 7h6" fill="none" stroke="#fff" strokeWidth="2.200" /></svg> },
  { name: 'Word', running: true, node: <OfficeTile letter="W" back="#2f80dc" side="#50a4f0" front="#1a4ca0" /> },
  { name: 'PowerPoint', running: true, node: <svg viewBox="0 0 22 20" className="h-5 w-[22px]"><circle cx="12" cy="10" r="9.500" fill="#e86c48" /><path d="M12 .5a9.500 9.500 0 0 1 9.500 9.500H12z" fill="#f89c7c" /><rect y="5" width="11" height="11" rx="1" fill="#bc3c20" /><text x="5.500" y="13.500" textAnchor="middle" fontSize="9" fontWeight="700" fill="#fff" fontFamily="Open Sans, sans-serif">P</text></svg> },
  { name: 'Snagit', running: true, node: <svg viewBox="0 0 20 20" className="size-[21px]"><rect width="20" height="20" rx="1" fill="#e8583c" /><path d="M15 4.500H7.500v5H13V15H5" fill="none" stroke="#fff" strokeWidth="3" /></svg> },
];

export default function App() {
  const [activeTab, setActiveTab] = useState('Save');

  return (
    <div className="flex h-screen w-full flex-col overflow-hidden bg-[#fdfdfd] font-['Open_Sans','Noto_Sans',sans-serif] text-[10px] text-[#222]">
      <header className="flex h-5 shrink-0 items-center bg-[#00446f] pl-0.5 text-white">
        <Orb letter="D" light="#40b060" dark="#0c6430" className="size-[14px]" />
        <h1 className="flex-1 pl-1 leading-none text-[#e6eef4]">Informatica PowerCenter Designer - [Mapping Designer - Worklet - [REPO1]]</h1>
        <button aria-label="Minimize" className="flex h-full w-10 items-center justify-center"><svg viewBox="0 0 10 10" className="size-[10px]"><path d="M0 5.500h9" stroke="#fff" /></svg></button>
        <button aria-label="Restore" className="flex h-full w-10 items-center justify-center"><svg viewBox="0 0 10 10" className="size-[10px]"><path d="M.5 2.500h6.500v7H.5zM2.500 2.500V.5h7v7H7" fill="none" stroke="#fff" /></svg></button>
        <button aria-label="Close" className="flex h-full w-10 items-center justify-center"><svg viewBox="0 0 10 10" className="size-[10px]"><path d="M.5.5l9 9M9.500.5l-9 9" stroke="#fff" /></svg></button>
      </header>

      <nav className="flex h-[17px] shrink-0 items-center bg-white pl-1.5">
        <Icon name="designer" className="mr-[5px] size-[15px]" />
        <div className="flex flex-1 items-center gap-3">
          {MENUS.map(m => <button key={m} className="leading-none">{m}</button>)}
        </div>
        <button aria-label="Minimize document" className="flex h-4 w-[17px] items-center justify-center border-l border-[#e4e4e4]"><span className="mt-1 h-px w-1.5 bg-[#555]" /></button>
        <button aria-label="Restore document" className="flex h-4 w-[17px] items-center justify-center border-x border-[#e4e4e4]"><svg viewBox="0 0 8 8" className="size-2"><path d="M.5 3.500h5v4h-5zM2.500 3V.500h5v4H6" fill="none" stroke="#555" /></svg></button>
        <button aria-label="Close document" className="flex h-4 w-[15px] items-center justify-center"><svg viewBox="0 0 8 8" className="size-[7px]"><path d="M1 1l6 6M7 1L1 7" stroke="#555" strokeWidth="1.500" /></svg></button>
      </nav>

      <div className="flex h-[27px] shrink-0">
        <div className="flex items-center border-r border-[#a0a0a0] bg-[#f0eff2] pr-[5px]">
          <Grip />
          <ToolButton label="Connect"><Icon name="greyA" /></ToolButton>
          <ToolButton label="Disconnect"><Icon name="greyB" /></ToolButton>
          <ToolButton label="Save"><Icon name="greyC" /></ToolButton>
          <Sep />
          <div className="flex h-[18px] items-center bg-white pl-[3px]">
            <Icon name="folderOpen" className="size-[15px]" />
            <Combo label="Folder" options={['Worklet - [REPO1]']} className="w-[181px] pl-0.5" arrow="bg-white" />
          </div>
          <Sep />
          <ToolButton label="Navigator" active><Icon name="paneLeft" /></ToolButton>
          <ToolButton label="Output" active><Icon name="paneBottom" /></ToolButton>
          <ToolButton label="Overview"><Icon name="paneZoom" /></ToolButton>
          <Sep />
          <ToolButton label="Zoom out"><Icon name="cursorGrey" /></ToolButton>
          <ToolButton label="Zoom in"><Icon name="cursorZoom" /></ToolButton>
          <ToolButton label="Zoom"><Icon name="greyBall" /></ToolButton>
          <Combo label="Zoom level" options={['100%']} className="w-[43px] pl-[3px]" arrow="bg-white" />
          <ToolButton label="Fit"><Icon name="fit" /></ToolButton>
          <Sep />
          <ToolButton label="Find in workspace"><Icon name="find" /></ToolButton>
          <ToolButton label="Find next"><Icon name="findNext" /></ToolButton>
          <span className="w-1" />
          <Combo label="Search text" options={['']} className="w-[172px]" />
          <Sep />
          <ToolButton label="Iconize"><Icon name="iconizeA" /></ToolButton>
          <ToolButton label="Restore links"><Icon name="iconizeB" /></ToolButton>
          <ToolButton label="Arrange" active><Icon name="iconizeC" /></ToolButton>
        </div>
      </div>

      <div className="flex h-7 shrink-0">
        <div className="flex items-center border-y border-r border-[#a0a0a0] bg-[#f0eff2] pr-1.5">
          <Grip />
          <ToolButton label="Repository Manager"><Orb letter="R" light="#98a4d8" dark="#303c78" /></ToolButton>
          <ToolButton label="Designer" active><Orb letter="D" light="#3cb070" dark="#0a5a28" /></ToolButton>
          <ToolButton label="Workflow Manager"><Orb letter="W" light="#f47850" dark="#a82c10" /></ToolButton>
          <ToolButton label="Workflow Monitor"><Orb letter="M" light="#8078c0" dark="#241c60" /></ToolButton>
        </div>
        <div className="flex items-center border-y border-r border-[#a0a0a0] bg-[#f0eff2] pr-1.5">
          <Grip />
          <div className="flex w-[504px] justify-between">
            {TRANSFORM_TOOLS.map((t, i) => <ToolButton key={t.label} label={t.label} active={i === 0}>{t.node}</ToolButton>)}
          </div>
        </div>
        <div className="flex items-center border-y border-r border-[#a0a0a0] bg-[#f0eff2] pr-[5px]">
          <Grip />
          <div className="flex w-[283px] justify-between">
            {ADVANCED_TOOLS.map(t => <ToolButton key={t.label} label={t.label}>{t.node}</ToolButton>)}
          </div>
        </div>
      </div>

      <main className="flex min-h-0 flex-1">
        <aside className="flex w-[280px] shrink-0 flex-col bg-[#f0eff2] pl-0.5">
          <div className="flex h-[15px] shrink-0 items-center gap-0.5 pr-0.5">
            <span className="flex flex-1 flex-col gap-0.5 pr-0.5">
              <span className="h-[3px] border-b border-[#a8a8a8] bg-white" />
              <span className="h-[3px] border-b border-[#a8a8a8] bg-white" />
            </span>
            <button aria-label="Panel menu" className="flex size-[10px] items-center justify-center border-b border-r border-[#888] bg-[#f6f6f6]"><svg viewBox="0 0 6 4" className="h-[3px] w-[5px]"><path d="M0 0h6L3 4z" fill="#aaa" /></svg></button>
            <button aria-label="Close panel" className="flex size-[10px] items-center justify-center border-b border-r border-[#666] bg-[#f6f6f6]"><svg viewBox="0 0 8 8" className="size-[7px]"><path d="M1 1l6 6M7 1L1 7" stroke="#111" strokeWidth="1.600" /></svg></button>
          </div>
          <div className="flex min-h-0 flex-1 border border-[#9a9a9a] bg-white">
            <ul className="flex min-w-0 flex-1 flex-col overflow-hidden">
              {TREE.map(n => <TreeRow key={n.label} node={n} />)}
            </ul>
            <div className="flex w-[13px] shrink-0 flex-col items-center bg-[#f0f0f0]">
              <span className="flex h-4 items-center"><Chevron dir="up" /></span>
              <span className="flex-[90]" />
              <span className="w-full flex-[308] bg-[#cdcdcf]" />
              <span className="flex-[10]" />
              <span className="flex h-4 items-center"><Chevron dir="down" /></span>
            </div>
          </div>
        </aside>

        <section className="ml-[7px] flex min-w-0 flex-1 flex-col border-t border-[#a8a8a8]">
          <div className="flex h-[26px] shrink-0 items-center bg-[#f0eff2] pl-1">
            <ToolButton label="Source Analyzer"><Icon name="srcAnalyzer" /></ToolButton>
            <ToolButton label="Target Designer"><Icon name="tgtDesigner" /></ToolButton>
            <ToolButton label="Transformation Developer"><Icon name="transDev" /></ToolButton>
            <ToolButton label="Mapplet Designer"><Icon name="mappletDes" /></ToolButton>
            <ToolButton label="Mapping Designer" active><Icon name="designer" /></ToolButton>
            <Sep />
            <div className="ml-1 flex h-[18px] items-center bg-white pl-px">
              <svg viewBox="0 0 16 16" className="size-[15px]"><MappingGlyph /><path d="M0 15h9" stroke="#333" /></svg>
              <Combo label="Mapping" options={['m_ETUDIANT']} className="w-[197px]" />
            </div>
          </div>
          <div className="flex min-h-0 flex-1 pr-px">
            <div className="relative min-w-0 flex-1 overflow-hidden border-l border-t border-[#7c7c7c] bg-[#c0c0c0]">
              <h2 className="pl-1.5 pt-[3px] font-['Liberation_Serif',serif] text-[17px] italic leading-5 text-[#c8c8c8] [text-shadow:-1px_-1px_0_#e8e8e8,1px_1px_0_#808080]">Mapping Designer</h2>
              <TargetWindow />
              <svg viewBox="0 0 12 18" className="absolute left-[639px] top-[142px] h-[18px] w-3"><path d="M1 1v13l3-2.500 2.500 5 2.500-1.500-2.500-4.500L11 10z" fill="#b4d820" stroke="#2c4408" /></svg>
            </div>
            <div className="flex w-[15px] shrink-0 flex-col items-center border-t border-[#7c7c7c] bg-[#f0eff2]">
              <span className="flex h-[15px] items-center"><Chevron dir="up" /></span>
              <span className="w-[13px] flex-[61] bg-[#cdcdcf]" />
              <span className="flex-[322]" />
              <span className="flex h-[15px] items-center"><Chevron dir="down" /></span>
            </div>
          </div>
          <div className="flex h-4 shrink-0 items-center border-l border-[#7c7c7c] bg-[#f0eff2] pr-4">
            <span className="flex w-[15px] justify-center"><Chevron dir="left" /></span>
            <span className="h-[13px] flex-[245] bg-[#cdcbcf]" />
            <span className="flex-[544]" />
            <span className="flex w-[15px] justify-center"><Chevron dir="right" /></span>
          </div>
        </section>
      </main>

      <section className="flex h-[31px] shrink-0 bg-white pb-[5px] pl-0.5 pt-1.5">
        <div className="flex w-4 shrink-0 flex-col items-center gap-0.5 bg-[#f0eff2] pt-0.5">
          <button aria-label="Close output" className="flex size-[10px] items-center justify-center border-b border-r border-[#666] bg-[#f6f6f6]"><svg viewBox="0 0 8 8" className="size-[7px]"><path d="M1 1l6 6M7 1L1 7" stroke="#111" strokeWidth="1.600" /></svg></button>
          <svg viewBox="0 0 8 6" className="h-1.5 w-2"><path d="M4 6V2M2 3l2-2 2 2M7.500 0v6" fill="none" stroke="#aaa" /></svg>
        </div>
        <div className="flex min-w-0 flex-1 border-l border-t border-[#888] bg-[#f0eff2] pt-px">
          <div className="flex min-w-0 flex-1 items-center border-t border-[#111] font-['Liberation_Sans',sans-serif] text-[10px]">
            {['M3 1v6M8 1v6L4 4z', 'M6 1v6L2 4z', 'M2 1v6l4-3z', 'M6 1v6M1 1v6l4-3z'].map((d, i) => (
              <button key={d} aria-label={['First tab', 'Previous tab', 'Next tab', 'Last tab'][i]} className="flex h-[15px] w-4 shrink-0 items-center justify-center border border-[#a0a0a0] border-l-white border-t-white">
                <svg viewBox="0 0 9 8" className="h-2 w-[9px]"><path d={d} fill="#999" stroke="#999" strokeWidth=".8" /></svg>
              </button>
            ))}
            <svg viewBox="0 0 8 16" className="h-4 w-2 shrink-0"><path d="M1 0l5 14" stroke="#222" /></svg>
            {OUTPUT_TABS.map((t, i) => (
              <React.Fragment key={t}>
                <button onClick={() => setActiveTab(t)} className={`h-[15px] whitespace-nowrap leading-[15px] ${activeTab === t ? 'bg-white' : ''}`}>{t}</button>
                <svg viewBox="0 0 10 16" className="h-4 w-[10px] shrink-0"><path d={i === OUTPUT_TABS.length - 1 ? 'M8 1L3 14' : 'M1 14L5.500 1M4.500 4l4 10'} fill="none" stroke="#222" /></svg>
              </React.Fragment>
            ))}
          </div>
          <div className="flex w-[54px] shrink-0 items-center border-l-2 border-[#333] pl-0.5">
            <button aria-label="Scroll tabs left" className="flex h-[15px] w-[15px] items-center justify-center border-b border-r border-[#aaa] bg-[#f8f8f8]"><Triangle dir="left" /></button>
            <span className="h-[15px] flex-1 border-b border-r border-[#999] bg-[#f4f4f4]" />
            <button aria-label="Scroll tabs right" className="flex h-[15px] w-[15px] items-center justify-center border-b border-r border-[#aaa] bg-[#f8f8f8]"><Triangle dir="right" /></button>
          </div>
        </div>
      </section>

      <footer className="flex h-[18px] shrink-0 items-stretch bg-[#f0eff2] pb-px">
        <p className="mr-[9px] flex-1 border border-l-0 border-[#a8a8a8] pl-0.5 leading-[15px]">Ready</p>
        <span className="mr-0.5 w-[26px] border border-[#a8a8a8]" />
        <span className="mr-0.5 w-[30px] border border-[#a8a8a8] text-center leading-[15px]">NUM</span>
        <span className="w-7 border border-r-0 border-[#a8a8a8]" />
      </footer>

      <div className="relative flex h-[33px] shrink-0 justify-between border-t border-[#6a8298] bg-linear-to-r from-[#243848] via-[#1c3040] to-[#182c50]">
        <div className="flex min-w-0 max-w-[987px] flex-1">
          {TASKS.map(t => (
            <button
              key={t.name}
              aria-label={t.name}
              className={`relative flex min-w-0 flex-1 items-center justify-center pb-1 ${t.active ? 'bg-[#475c69]' : ''}`}
            >
              {t.node}
              {t.running && <span className="absolute inset-x-1 bottom-0 h-0.5 bg-[#8cc4ea]" />}
            </button>
          ))}
        </div>
        <div className="flex shrink-0 flex-col items-center pr-1 text-white">
          <span className="leading-[14px]">14:32</span>
          <span className="leading-4">25/01/2021</span>
        </div>
        <p className="pointer-events-none absolute bottom-0.5 right-24 whitespace-nowrap font-['Open_Sans',sans-serif] text-[19px] leading-6 text-[#a4a8ac]/80">Activer Windows</p>
      </div>
    </div>
  );
}
